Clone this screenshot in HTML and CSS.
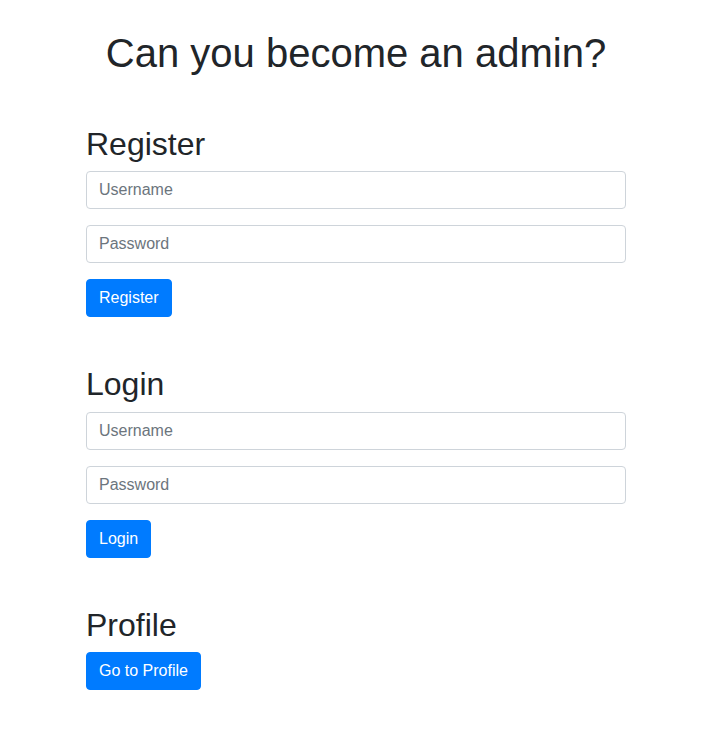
FILE: index.html
```html
<!DOCTYPE html>
<html>
<head>
    <title>Can you become an admin?</title>
    <link rel="stylesheet" href="styles.css">
</head>
<body>
    <div class="container">
        <h1>Can you become an admin?</h1>

        <div class="section">
            <h2>Register</h2>
            <form id="register-form">
                <div class="form-group">
                    <input type="text" class="form-control" id="register-username" placeholder="Username">
                </div>
                <div class="form-group">
                    <input type="password" class="form-control" id="register-password" placeholder="Password">
                </div>
                <button type="submit" class="btn btn-primary">Register</button>
            </form>
        </div>

        <div class="section">
            <h2>Login</h2>
            <form id="login-form">
                <div class="form-group">
                    <input type="text" class="form-control" id="login-username" placeholder="Username">
                </div>
                <div class="form-group">
                    <input type="password" class="form-control" id="login-password" placeholder="Password">
                </div>
                <button type="submit" class="btn btn-primary">Login</button>
            </form>
        </div>

        <div class="section">
            <h2>Profile</h2>
            <button class="btn btn-primary" id="profile-btn">Go to Profile</button>
        </div>
    </div>
</body>
</html>
```

FILE: styles.css
```css
body {
    margin: 0;
    padding: 0 10px 0 0;
    font-family: "Liberation Sans", Arial, sans-serif;
    font-size: 16px;
    line-height: 1.5;
    color: #212529;
    background-color: #fff;
}

.container {
    max-width: 540px;
    margin: 0 auto;
}

h1,
h2 {
    font-weight: 500;
    line-height: 1.2;
}

h1 {
    font-size: 40px;
    text-align: center;
    margin: 29px 0 8px;
}

h2 {
    font-size: 32px;
    margin: 0 0 8px;
}

.section {
    margin-top: 48px;
}

form {
    margin: 0;
}

.form-group {
    margin-bottom: 16px;
}

.form-control {
    display: block;
    width: 100%;
    height: 38px;
    box-sizing: border-box;
    padding: 6px 12px;
    font-family: inherit;
    font-size: 16px;
    line-height: 1.5;
    color: #495057;
    background-color: #fff;
    border: 1px solid #ced4da;
    border-radius: 4px;
}

.form-control::placeholder {
    color: #6c757d;
    opacity: 1;
}

.btn {
    display: inline-block;
    padding: 6px 12px;
    font-family: inherit;
    font-size: 16px;
    line-height: 1.5;
    border: 1px solid transparent;
    border-radius: 4px;
    cursor: pointer;
}

.btn-primary {
    color: #fff;
    background-color: #007bff;
    border-color: #007bff;
}

.btn-primary:hover {
    background-color: #0069d9;
    border-color: #0062cc;
}
```
